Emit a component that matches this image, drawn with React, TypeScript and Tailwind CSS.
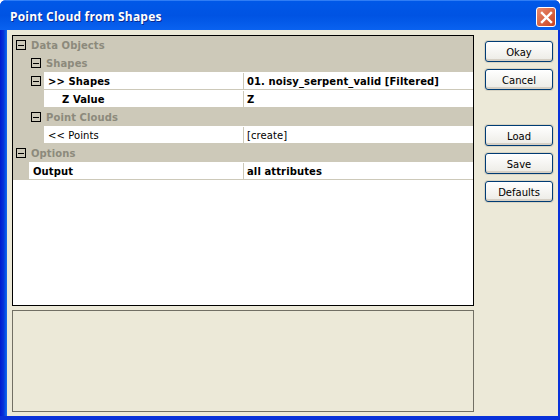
const uiFont = "font-['DejaVu_Sans',sans-serif]";

function Toggle() {
  return (
    <div className="flex h-[10px] w-[10px] shrink-0 items-center justify-center border border-black">
      <div className="h-px w-[6px] bg-black" />
    </div>
  );
}

function Section({ label, indent }: { label: string; indent: number }) {
  return (
    <div className="flex h-[18px] items-center bg-[#cdc9b9]">
      <div className={indent === 0 ? "w-[3px]" : "w-[18px]"} />
      <Toggle />
      <div className="ml-[5px] text-[10px] font-bold tracking-[0.1px] text-[#8c8a7c]">{label}</div>
    </div>
  );
}

function Row({
  toggle,
  inset,
  pad,
  label,
  value,
  bold = true,
}: {
  toggle?: boolean;
  inset: string;
  pad: string;
  label: string;
  value: string;
  bold?: boolean;
}) {
  const weight = bold ? "font-bold" : "font-normal";
  return (
    <div className="flex h-[18px] bg-[#cdc9b9]">
      <div className={`flex shrink-0 items-center pl-[18px] ${inset}`}>
        {toggle && <Toggle />}
      </div>
      <div className="flex flex-1 border-b border-[#cdc9b9] bg-white pt-px text-[10px] tracking-[0.1px] text-black">
        <div className={`flex flex-1 items-center border-r border-[#cdc9b9] ${pad} ${weight}`}>
          {label}
        </div>
        <div className={`flex w-[229px] items-center pl-[3px] ${weight}`}>{value}</div>
      </div>
    </div>
  );
}

function XpButton({ label, className = "" }: { label: string; className?: string }) {
  return (
    <button
      className={`flex h-[21px] w-[68px] items-center justify-center rounded-[3px] border border-[#003c74] bg-gradient-to-b from-white to-[#ecebe5] pt-px text-[10px] text-black shadow-[inset_0_-2px_0_#d6d0c5,0_0_0_1px_#d8d4c4] ${className}`}
    >
      {label}
    </button>
  );
}

export default function App() {
  return (
    <div className={`flex h-[420px] w-[560px] flex-col overflow-hidden rounded-t-[6px] bg-[#0831d9] ${uiFont}`}>
      <div className="flex h-[30px] shrink-0 items-center justify-between border-t border-[#2f7df5] bg-gradient-to-b from-[#0058e8] via-[#0053e3] to-[#0a62f0] pl-[10px] pr-[4px] pt-[3px]">
        <div className="font-['Open_Sans',sans-serif] text-[12px] font-bold tracking-[0.2px] text-white [text-shadow:1px_1px_0_#0a2a90]">
          Point Cloud from Shapes
        </div>
        <div className="flex h-[20px] w-[20px] items-center justify-center rounded-[3px] border border-white bg-gradient-to-br from-[#e88a6c] to-[#c9401c]">
          <svg width="13" height="13" viewBox="0 0 13 13">
            <path d="M2 2 L11 11 M11 2 L2 11" stroke="#fff" strokeWidth="2.4" strokeLinecap="square" />
          </svg>
        </div>
      </div>

      <div className="flex min-h-0 flex-1">
        <div className="w-[7px] shrink-0 bg-gradient-to-r from-[#0019cf] via-[#0831d9] to-[#166aee]" />
        <div className="flex flex-1 gap-[11px] bg-[#ece9d8] pl-[5px] pr-[5px] pt-[5px]">
          <div className="flex w-[462px] flex-col gap-[4px]">
            <div className="h-[271px] border border-black bg-white">
              <Section label="Data Objects" indent={0} />
              <Section label="Shapes" indent={1} />
              <Row toggle inset="w-[31px]" pad="pl-[4px]" label=">> Shapes" value="01. noisy_serpent_valid [Filtered]" />
              <Row inset="w-[31px]" pad="pl-[18px]" label="Z Value" value="Z" />
              <Section label="Point Clouds" indent={1} />
              <Row inset="w-[31px]" pad="pl-[4px]" label="<< Points" value="[create]" bold={false} />
              <Section label="Options" indent={0} />
              <Row inset="w-[16px] !pl-0" pad="pl-[4px]" label="Output" value="all attributes" />
            </div>
            <div className="h-[102px] border border-[#716f64]" />
          </div>
          <div className="flex flex-col pt-[6px]">
            <XpButton label="Okay" />
            <XpButton label="Cancel" className="mt-[7px]" />
            <XpButton label="Load" className="mt-[35px]" />
            <XpButton label="Save" className="mt-[7px]" />
            <XpButton label="Defaults" className="mt-[7px]" />
          </div>
        </div>
        <div className="w-[2px] shrink-0 bg-[#0831d9]" />
      </div>
      <div className="h-[4px] shrink-0 bg-[#0831d9]" />
    </div>
  );
}
